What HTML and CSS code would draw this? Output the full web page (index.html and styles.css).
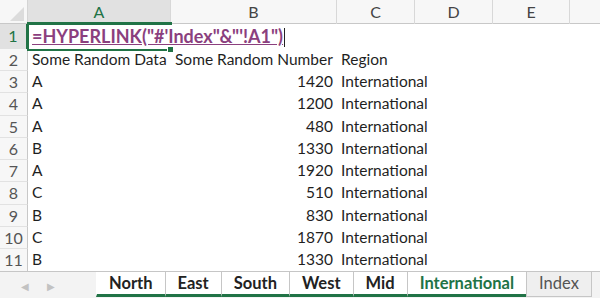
FILE: index.html
```html
<!DOCTYPE html>
<html lang="en">
<head>
  <meta charset="UTF-8" />
  <title>Sheet - Index links</title>
  <link rel="stylesheet" href="styles.css">
</head>
<body>

  <div class="sheet">
    <div class="row head-row">
      <div class="corner"><span class="tri"></span></div>
      <div class="col-head active">A</div>
      <div class="col-head">B</div>
      <div class="col-head">C</div>
      <div class="col-head">D</div>
      <div class="col-head">E</div>
      <div class="col-head last"></div>
    </div>

    <div class="row first">
      <div class="row-head active">1</div>
      <div class="cell selected"><span class="formula">=HYPERLINK("#'Index"&amp;"'!A1")</span><span class="caret"></span><span class="handle"></span></div>
      <div class="cell"></div>
      <div class="cell"></div>
      <div class="cell"></div>
      <div class="cell"></div>
      <div class="cell"></div>
    </div>

    <div class="row">
      <div class="row-head">2</div>
      <div class="cell">Some Random Data</div>
      <div class="cell">Some Random Number</div>
      <div class="cell">Region</div>
      <div class="cell"></div>
      <div class="cell"></div>
      <div class="cell"></div>
    </div>

    <div id="rows"></div>
  </div>

  <div class="tab-bar">
    <div class="nav">
      <span class="arrow">&#9664;</span>
      <span class="arrow">&#9654;</span>
    </div>
    <div class="tabs">
      <div class="tab">North</div>
      <div class="tab">East</div>
      <div class="tab">South</div>
      <div class="tab">West</div>
      <div class="tab">Mid</div>
      <div class="tab current">International</div>
      <div class="tab other">Index</div>
    </div>
  </div>

  <script>
    // rows 3 - 11
    const data = [
      ["A", 1420], ["A", 1200], ["A", 480], ["B", 1330], ["A", 1920],
      ["C", 510], ["B", 830], ["C", 1870], ["B", 1330]
    ];
    const rows = document.getElementById("rows");
    rows.innerHTML = data.map((item, i) => `
      <div class="row">
        <div class="row-head">${i + 3}</div>
        <div class="cell">${item[0]}</div>
        <div class="cell num">${item[1]}</div>
        <div class="cell">International</div>
        <div class="cell"></div>
        <div class="cell"></div>
        <div class="cell"></div>
      </div>
    `).join('');
  </script>

</body>
</html>
```

FILE: styles.css
```css
body {
  margin: 0;
  width: 600px;
  height: 298px;
  overflow: hidden;
  background: #fff;
  font-family: Lato, "Liberation Sans", sans-serif;
  font-size: 15.5px;
  color: #1f1f1f;
}

.sheet {
  height: 271px;
  overflow: hidden;
}

.row {
  display: grid;
  grid-template-columns: 28px 143px 166px 78px 78px 77px 1fr;
  height: 22.3px;
  line-height: 21px;
}

.head-row {
  height: 24px;
  line-height: 23px;
  font-size: 16px;
  background: #f7f7f7;
  border-bottom: 1px solid #c8c8c8;
  box-sizing: border-box;
}

.corner {
  position: relative;
  border-right: 1px solid #d4d4d4;
}

.tri {
  position: absolute;
  right: 3px;
  bottom: 3px;
  width: 0;
  height: 0;
  border-left: 14px solid transparent;
  border-bottom: 14px solid #dcdcdc;
}

.col-head {
  text-align: center;
  color: #444;
  border-right: 1px solid #d8d8d8;
}

.col-head.last {
  border-right: none;
}

.col-head.active {
  background: #e1e1e1;
  color: #217346;
  border-bottom: 2px solid #217346;
  margin-bottom: -1px;
}

.row.first {
  height: 24.7px;
  line-height: 24px;
}

.row-head {
  text-align: center;
  color: #555;
  font-size: 16px;
  background: #f7f7f7;
  border-right: 1px solid #c8c8c8;
  border-bottom: 1px solid #e2e2e2;
  box-sizing: border-box;
}

.row-head.active {
  background: #e1e1e1;
  color: #217346;
  border-right: 2px solid #217346;
}

.cell {
  padding: 0 4px;
  white-space: nowrap;
  overflow: visible;
  min-width: 0;
}

.cell.num {
  text-align: right;
}

.cell.selected {
  position: relative;
  border: 2px solid #217346;
  margin: -2px -1px 0 -1px;
  padding: 0 3px;
  z-index: 1;
}

/* text being edited runs over the right edge of the selection */
.formula {
  position: relative;
  background: #fff;
  font-weight: bold;
  font-size: 18px;
  color: #8b3f7e;
  text-decoration: underline;
}

.caret {
  display: inline-block;
  width: 1px;
  height: 19px;
  margin-left: 1px;
  vertical-align: -4px;
  background: #222;
  position: relative;
}

.handle {
  position: absolute;
  right: -4px;
  bottom: -4px;
  width: 5px;
  height: 5px;
  background: #217346;
  border: 1px solid #fff;
}

.tab-bar {
  display: flex;
  height: 27px;
  background: #f3f3f3;
  border-top: 1px solid #c6c6c6;
}

.nav {
  width: 96px;
  box-sizing: border-box;
  display: flex;
  gap: 18px;
  padding-left: 21px;
  align-items: center;
  font-size: 10px;
  color: #c2c2c2;
}

.tabs {
  display: flex;
  height: 25px;
}

.tab {
  padding: 0 12px;
  line-height: 22px;
  font-size: 16.5px;
  font-weight: bold;
  color: #222;
  background: #fff;
  border-left: 1px solid #c6c6c6;
  border-bottom: 3px solid #217346;
}

.tab:first-child {
  border-left-color: #fff;
}

.tab.current {
  color: #217346;
}

.tab.other {
  font-weight: normal;
  color: #555;
  background: #efefef;
  border-right: 1px solid #c6c6c6;
  border-bottom: 1px solid #c6c6c6;
}
```
